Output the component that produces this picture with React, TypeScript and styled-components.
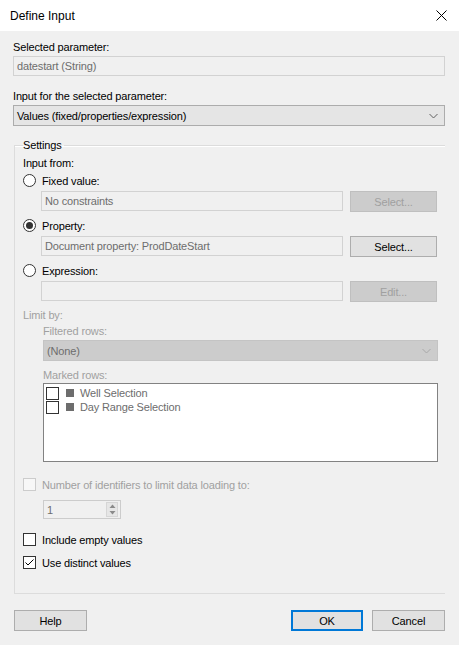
import React from "react";
import styled, { createGlobalStyle } from "styled-components";

const FONT = `"Liberation Sans", Arial, sans-serif`;

const Global = createGlobalStyle`
  html, body { margin: 0; padding: 0; background: #f0f0f0; }
  body { font-family: ${FONT}; font-size: 11px; letter-spacing: -0.15px; color: #000; }
  * { box-sizing: border-box; }
`;

const Window = styled.div`
  width: 459px;
  height: 645px;
  background: #f0f0f0;
  display: flex;
  flex-direction: column;
  overflow: hidden;
`;

const TitleBar = styled.div`
  height: 31px;
  flex: none;
  background: #ffffff;
  display: flex;
  align-items: center;
  justify-content: space-between;
  padding: 0 12px 0 10px;
  font-size: 12px;
  letter-spacing: 0;
  color: #000;
`;

const Body = styled.div`
  display: flex;
  flex-direction: column;
  padding: 0 14px 0 13px;
`;

const Label = styled.div<{ $mt?: number; $disabled?: boolean; $indent?: number }>`
  line-height: 15px;
  height: 15px;
  flex: none;
  margin-top: ${(p) => p.$mt ?? 0}px;
  margin-left: ${(p) => p.$indent ?? 0}px;
  color: ${(p) => (p.$disabled ? "#a0a0a0" : "#000")};
  white-space: nowrap;
`;

const ReadField = styled.div<{ $mt?: number; $grow?: boolean }>`
  height: 20px;
  flex: ${(p) => (p.$grow ? "1 1 auto" : "none")};
  margin-top: ${(p) => p.$mt ?? 0}px;
  border: 1px solid #d2d2d2;
  background: #f0f0f0;
  color: #6d6d6d;
  padding-left: 3px;
  display: flex;
  align-items: center;
  min-width: 0;
  white-space: nowrap;
`;

const Combo = styled.div<{ $mt?: number; $disabled?: boolean; $indent?: number }>`
  height: 21px;
  flex: none;
  margin-top: ${(p) => p.$mt ?? 0}px;
  margin-left: ${(p) => p.$indent ?? 0}px;
  margin-right: ${(p) => (p.$indent ? 7 : 0)}px;
  border: 1px solid ${(p) => (p.$disabled ? "#c4c4c4" : "#acacac")};
  background: ${(p) => (p.$disabled ? "#cccccc" : "#e5e5e5")};
  color: ${(p) => (p.$disabled ? "#6d6d6d" : "#000")};
  padding: 0 6px 0 3px;
  display: flex;
  align-items: center;
  justify-content: space-between;
  white-space: nowrap;
`;

const Group = styled.fieldset`
  margin: 12px 0 0 1px;
  padding: 3px 0 23px 8px;
  border: none;
  border-top: 1px solid #dcdcdc;
  border-left: 1px solid #dcdcdc;
  border-bottom: 1px solid #dcdcdc;
  box-shadow: inset 0 1px 0 #ffffff;
  min-width: 0;
  display: flex;
  flex-direction: column;
`;

const Legend = styled.legend`
  padding: 0 2px 0 0;
  margin-left: 0;
  line-height: 15px;
  font-size: 11px;
  color: #000;
`;

const ChoiceRow = styled.label<{ $mt?: number; $disabled?: boolean }>`
  display: flex;
  align-items: center;
  height: 15px;
  flex: none;
  margin-top: ${(p) => p.$mt ?? 0}px;
  gap: 6px;
  color: ${(p) => (p.$disabled ? "#a0a0a0" : "#000")};
  white-space: nowrap;
`;

const Radio = styled.span<{ $checked?: boolean }>`
  width: 13px;
  height: 13px;
  border-radius: 50%;
  border: 1px solid #333333;
  background: #ffffff;
  display: flex;
  align-items: center;
  justify-content: center;
  flex: none;
  &::after {
    content: "";
    width: 7px;
    height: 7px;
    border-radius: 50%;
    background: ${(p) => (p.$checked ? "#333333" : "transparent")};
  }
`;

const Box = styled.span<{ $disabled?: boolean }>`
  width: 13px;
  height: 13px;
  border: 1px solid ${(p) => (p.$disabled ? "#cccccc" : "#333333")};
  background: ${(p) => (p.$disabled ? "#f7f7f7" : "#ffffff")};
  display: flex;
  align-items: center;
  justify-content: center;
  flex: none;
`;

const FieldRow = styled.div<{ $mt?: number }>`
  display: flex;
  align-items: flex-start;
  flex: none;
  gap: 7px;
  margin: ${(p) => p.$mt ?? 0}px 8px 0 18px;
`;

const Button = styled.button<{ $disabled?: boolean; $default?: boolean; $w?: number }>`
  width: ${(p) => p.$w ?? 87}px;
  height: 21px;
  flex: none;
  margin: 0;
  padding: 0;
  font-family: ${FONT};
  font-size: 11px;
  letter-spacing: -0.15px;
  background: ${(p) => (p.$disabled ? "#cccccc" : "#e1e1e1")};
  color: ${(p) => (p.$disabled ? "#a0a0a0" : "#000")};
  border: 1px solid ${(p) => (p.$default ? "#0078d7" : p.$disabled ? "#bfbfbf" : "#adadad")};
  box-shadow: ${(p) => (p.$default ? "inset 0 0 0 1px #0078d7" : "none")};
`;

const ListBox = styled.div`
  height: 79px;
  flex: none;
  margin: 0 7px 0 20px;
  border: 1px solid #828282;
  background: #ffffff;
  padding: 2px 0 0 2px;
  display: flex;
  flex-direction: column;
`;

const ListItem = styled.div`
  display: flex;
  align-items: center;
  height: 14px;
  flex: none;
  color: #6d6d6d;
  white-space: nowrap;
`;

const Swatch = styled.span`
  width: 8px;
  height: 8px;
  background: #6d6d6d;
  margin: 0 6px 0 7px;
  flex: none;
`;

const Spinner = styled.div<{ $mt?: number }>`
  width: 78px;
  height: 19px;
  flex: none;
  margin: ${(p) => p.$mt ?? 0}px 0 0 20px;
  border: 1px solid #cccccc;
  background: #f0f0f0;
  color: #6d6d6d;
  display: flex;
  align-items: center;
  justify-content: space-between;
  padding: 0 2px 0 3px;
`;

const SpinButtons = styled.span`
  width: 12px;
  height: 15px;
  background: #e6e6e6;
  border: 1px solid #d6d6d6;
  display: flex;
  flex-direction: column;
  align-items: center;
  justify-content: space-around;
`;

const Footer = styled.div`
  display: flex;
  align-items: center;
  margin-top: 16px;
  padding-left: 1px;
`;

const Spacer = styled.div`
  flex: 1;
`;

const FooterGap = styled.div`
  width: 9px;
`;

const Chevron = ({ color = "#606060" }: { color?: string }) => (
  <svg width="9" height="6" viewBox="0 0 9 6">
    <path d="M0.5 1 L4.5 5 L8.5 1" fill="none" stroke={color} strokeWidth="1" />
  </svg>
);

const CloseIcon = () => (
  <svg width="11" height="11" viewBox="0 0 11 11">
    <path d="M0.5 0.5 L10.5 10.5 M10.5 0.5 L0.5 10.5" stroke="#000" strokeWidth="1" />
  </svg>
);

const Check = () => (
  <svg width="11" height="11" viewBox="0 0 11 11">
    <path d="M1.5 5.5 L4 8 L9.5 2.5" fill="none" stroke="#000" strokeWidth="1" />
  </svg>
);

const Tri = ({ up }: { up?: boolean }) => (
  <svg width="7" height="4" viewBox="0 0 7 4">
    <path d={up ? "M0.5 4 L3.5 0.5 L6.5 4 Z" : "M0.5 0 L3.5 3.5 L6.5 0 Z"} fill="#8a8a8a" />
  </svg>
);

export default function App() {
  return (
    <>
      <Global />
      <Window>
        <TitleBar>
          <span>Define Input</span>
          <CloseIcon />
        </TitleBar>
        <Body>
          <Label $mt={9}>Selected parameter:</Label>
          <ReadField $mt={1}>datestart (String)</ReadField>
          <Label $mt={13}>Input for the selected parameter:</Label>
          <Combo $mt={1}>
            <span>Values (fixed/properties/expression)</span>
            <Chevron />
          </Combo>

          <Group>
            <Legend>Settings</Legend>
            <Label>Input from:</Label>
            <ChoiceRow $mt={2}>
              <Radio />
              <span>Fixed value:</span>
            </ChoiceRow>
            <FieldRow $mt={3}>
              <ReadField $grow>No constraints</ReadField>
              <Button $disabled>Select...</Button>
            </FieldRow>
            <ChoiceRow $mt={6}>
              <Radio $checked />
              <span>Property:</span>
            </ChoiceRow>
            <FieldRow $mt={3}>
              <ReadField $grow>Document property: ProdDateStart</ReadField>
              <Button>Select...</Button>
            </FieldRow>
            <ChoiceRow $mt={6}>
              <Radio />
              <span>Expression:</span>
            </ChoiceRow>
            <FieldRow $mt={3}>
              <ReadField $grow />
              <Button $disabled>Edit...</Button>
            </FieldRow>

            <Label $mt={6} $disabled>Limit by:</Label>
            <Label $mt={1} $disabled $indent={20}>Filtered rows:</Label>
            <Combo $mt={1} $disabled $indent={20}>
              <span>(None)</span>
              <Chevron color="#a8a8a8" />
            </Combo>
            <Label $mt={7} $disabled $indent={20}>Marked rows:</Label>
            <ListBox>
              <ListItem>
                <Box />
                <Swatch />
                <span>Well Selection</span>
              </ListItem>
              <ListItem>
                <Box />
                <Swatch />
                <span>Day Range Selection</span>
              </ListItem>
            </ListBox>

            <ChoiceRow $mt={15} $disabled>
              <Box $disabled />
              <span>Number of identifiers to limit data loading to:</span>
            </ChoiceRow>
            <Spinner $mt={8}>
              <span>1</span>
              <SpinButtons>
                <Tri up />
                <Tri />
              </SpinButtons>
            </Spinner>

            <ChoiceRow $mt={13}>
              <Box />
              <span>Include empty values</span>
            </ChoiceRow>
            <ChoiceRow $mt={8}>
              <Box>
                <Check />
              </Box>
              <span>Use distinct values</span>
            </ChoiceRow>
          </Group>

          <Footer>
            <Button $w={73}>Help</Button>
            <Spacer />
            <Button $w={72} $default>
              OK
            </Button>
            <FooterGap />
            <Button $w={73}>Cancel</Button>
          </Footer>
        </Body>
      </Window>
    </>
  );
}
